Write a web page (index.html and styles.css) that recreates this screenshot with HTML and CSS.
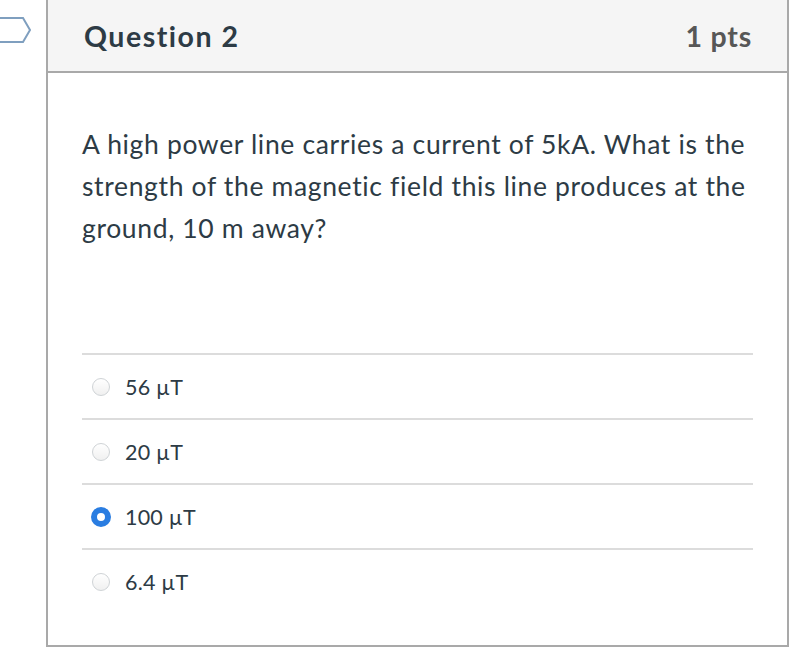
FILE: index.html
```html
<!DOCTYPE html>
<html>
<head>
<meta charset="utf-8">
<link rel="stylesheet" href="styles.css">
</head>
<body>
<svg class="flag" width="34" height="30" viewBox="0 0 34 30"><path d="M-4 2 H23 L30 14 L23 26 H-4" fill="none" stroke="#7f9fbf" stroke-width="2"/></svg>
<div class="card">
  <div class="header">
    <span class="title">Question 2</span>
    <span class="pts">1 pts</span>
  </div>
  <div class="body">
    <p class="question">A high power line carries a current of 5kA. What is the strength of the magnetic field this line produces at the ground, 10 m away?</p>
    <div class="answers">
      <div class="answer"><span class="radio"></span><span class="label">56 µT</span></div>
      <div class="answer"><span class="radio"></span><span class="label">20 µT</span></div>
      <div class="answer"><span class="radio checked"></span><span class="label">100 µT</span></div>
      <div class="answer"><span class="radio"></span><span class="label">6.4 µT</span></div>
    </div>
  </div>
</div>
</body>
</html>
```
FILE: styles.css
```css
html, body { margin: 0; padding: 0; background: #fff; }
body { font-family: Lato, "Open Sans", sans-serif; color: #2d3b45; position: relative; width: 812px; height: 652px; overflow: hidden; }
.flag { position: absolute; left: 0; top: 16px; }
.card {
  margin: -2px 0 0 46px;
  width: 739px;
  border: 2px solid #a9a9a9;
  background: #fff;
}
.header {
  height: 71px;
  background: #f5f5f5;
  border-bottom: 2px solid #a9a9a9;
  display: flex;
  align-items: center;
  justify-content: space-between;
  padding: 0 36px;
}
.title { font-size: 28.5px; font-weight: 700; color: #2d3b45; letter-spacing: 1.5px; }
.pts { font-size: 28.5px; font-weight: 700; color: #575757; letter-spacing: 0.8px; margin-right: -1px; }
.body { padding: 50px 34px 32px 34px; }
.question { margin: 0; font-size: 26.5px; line-height: 42px; letter-spacing: 0.65px; }
.answers { margin-top: 104px; }
.answer {
  height: 63px;
  border-top: 2px solid #dcdcdc;
  display: flex;
  align-items: center;
  padding-left: 10px;
}
.radio {
  width: 18px; height: 18px;
  border-radius: 50%;
  border: 1px solid #cfd3d6;
  background: linear-gradient(#fff, #f0f0f0);
  box-sizing: border-box;
  margin-right: 15px;
  flex: none;
}
.radio.checked {
  width: 20px; height: 20px;
  border: 6.5px solid #2a7de1;
  background: #fff;
  margin-left: -1px;
  margin-right: 14px;
}
.label { font-size: 21.5px; color: #2d3b45; letter-spacing: 0.2px; }
```
